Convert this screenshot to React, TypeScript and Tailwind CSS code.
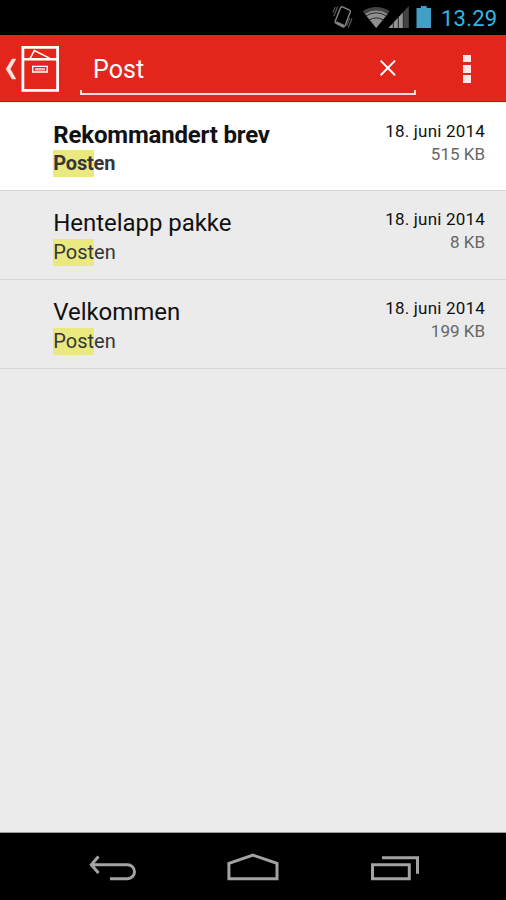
import React from 'react'
import clsx from 'clsx'

type Letter = {
  subject: string
  sender: string
  date: string
  size: string
  unread?: boolean
}

const letters: Letter[] = [
  { subject: 'Rekommandert brev', sender: 'Posten', date: '18. juni 2014', size: '515 KB', unread: true },
  { subject: 'Hentelapp pakke', sender: 'Posten', date: '18. juni 2014', size: '8 KB' },
  { subject: 'Velkommen', sender: 'Posten', date: '18. juni 2014', size: '199 KB' },
]

const query = 'Post'

function StatusBar() {
  return (
    <div className="flex h-[35px] shrink-0 items-center justify-end bg-black pr-[9px]">
      <svg width="104" height="35" viewBox="330 0 104 35" fill="none">
        {/* Vibrate */}
        <path d="M342.4 6.8 349.6 10Q350.8 10.8 350.3 12L345 25.8Q344.2 27.4 342.8 26.8L335.8 23.2Q334.8 22.4 335.2 21.2L340.6 7.8Q341.2 6.4 342.4 6.8Z" stroke="#858585" strokeWidth="1.4" />
        <path d="M336.4 22.2 344 26" stroke="#858585" strokeWidth="2" />
        <path d="M337.8 6.5 333.8 16M335.2 7 333 12.5M352 18.5 348.4 27.5M349.8 18 346.6 26" stroke="#5c5c5c" strokeWidth="1.1" />
        {/* Wifi */}
        <path d="M376.2 28 362.8 11.2Q376.2 3 389.8 11.2Z" fill="#434343" />
        <path d="M376.2 28 365 14Q376.2 7.2 387.6 14Z" fill="#8f8f8f" />
        <path d="M366 15.8Q376.2 9.8 386.4 15.8M369.2 20Q376.2 15.8 383.4 20" stroke="#282828" strokeWidth="1" />
        {/* Signal */}
        <path d="M388.5 28 408.8 6V28Z" fill="#434343" />
        <path d="M388.5 28 403.4 12V28Z" fill="#969696" />
        <path d="M393.3 22V28M398.3 16.5V28M403.3 11V28" stroke="#222" strokeWidth="1" />
        {/* Battery */}
        <path d="M416.5 8H421V6H426.7V8H431V28H416.5Z" fill="#419fc5" />
      </svg>
      <span className="mt-px ml-[7px] w-[56px] text-[22px] whitespace-nowrap tracking-[0.2px] text-[#33b5e5]">
        13.29
      </span>
    </div>
  )
}

function ActionBar() {
  return (
    <header className="flex h-[67px] shrink-0 border-b border-[#d91006] bg-[#e2261c] pl-[5px]">
      <svg width="56" height="66" viewBox="5 35 56 66" fill="none">
        <path d="M15.8 59H12.2L6 69 12.2 79H15.8L10.2 69Z" fill="#fbe3e1" stroke="#fbe3e1" strokeWidth="0.5" />
        <path d="M22.9 47.4H57.6V90.4H22.9Z" stroke="#fff" strokeWidth="2.8" />
        <path d="M22 59.2H58" stroke="#fff" strokeWidth="2.4" />
        <path d="M30 58.6 34.3 50.6 49.5 58.2" stroke="#fff" strokeWidth="1.5" />
        <path d="M32.7 66.4H47.2V72H32.7Z" stroke="#fff" strokeWidth="1.4" />
        <path d="M35 68H45V70.6H35Z" fill="#f7b5b1" />
      </svg>
      <div className="ml-[18.5px] flex w-[336px] flex-col">
        <div className="flex h-[55px] items-end justify-between pr-[19px] pl-[13.5px]">
          <span className="h-[43px] text-[25px] leading-[46px] tracking-[0.1px] text-white">{query}</span>
          <svg width="18" height="43" viewBox="379 47 18 43" fill="none">
            <path d="M380.6 60.6 395 75.2M395 60.6 380.6 75.2" stroke="#fff" strokeWidth="2" />
          </svg>
        </div>
        <div className="h-[5px] border-x-2 border-b-2 border-[#f8dcda]" />
      </div>
      <div className="ml-[47.5px] flex flex-col gap-[2.8px] pt-[19.5px]">
        <span className="h-[7.7px] w-2 bg-[#fde6e5]" />
        <span className="h-[7.7px] w-2 bg-[#fde6e5]" />
        <span className="h-[7.7px] w-2 bg-[#fde6e5]" />
      </div>
    </header>
  )
}

function LetterRow({ letter }: { letter: Letter }) {
  return (
    <li
      className={clsx(
        'flex h-[88.7px] justify-between border-b border-[#d5d5d5] pr-[21px] pl-[53.3px]',
        letter.unread ? 'bg-white font-bold' : 'bg-[#ebebeb]',
      )}
    >
      <div className="pt-[17px]">
        <h2
          className={clsx(
            'text-[24px] leading-[30px] whitespace-nowrap text-[#111]',
            letter.unread ? 'tracking-[-0.18px]' : 'tracking-[-0.05px]',
          )}
        >
          {letter.subject}
        </h2>
        <p className={clsx('mt-[0.8px] h-[27px] text-[20px] leading-[27px] text-[#363636]', letter.unread && 'tracking-[-0.2px]')}>
          <mark className="inline-block h-[27px] bg-[#e9e97f] text-inherit">{query}</mark>
          {letter.sender.slice(query.length)}
        </p>
      </div>
      <div className="pt-[17px] text-right text-[17px] leading-[23.3px] font-normal">
        <p className="tracking-[0.2px] text-[#111]">{letter.date}</p>
        <p className="text-[#666]">{letter.size}</p>
      </div>
    </li>
  )
}

function NavBar() {
  return (
    <nav className="flex h-[68px] shrink-0 items-center border-t border-[#999] bg-black pl-[88px]">
      <svg width="332" height="67" viewBox="88 833 332 67" fill="none" stroke="#a3a3a3" strokeWidth="3">
        <path d="M98.5 856.5 91.3 864.7 98.5 873M91 864.7H127.5A7 7 0 0 1 127.5 878.7H110" />
        <path d="M228.9 863.3 253 855.2 277 863.3V878.7H228.9Z" />
        <path d="M372.5 864.7H409.3V878.7H372.5ZM382 857.7H417.5V873.8" />
      </svg>
    </nav>
  )
}

export default function App() {
  return (
    <div className="flex h-[900px] w-[506px] flex-col overflow-hidden bg-[#ebebeb] font-[Roboto,sans-serif]">
      <StatusBar />
      <ActionBar />
      <ul className="flex-1 pt-[0.5px]">
        {letters.map((letter) => (
          <LetterRow key={letter.subject} letter={letter} />
        ))}
      </ul>
      <NavBar />
    </div>
  )
}
